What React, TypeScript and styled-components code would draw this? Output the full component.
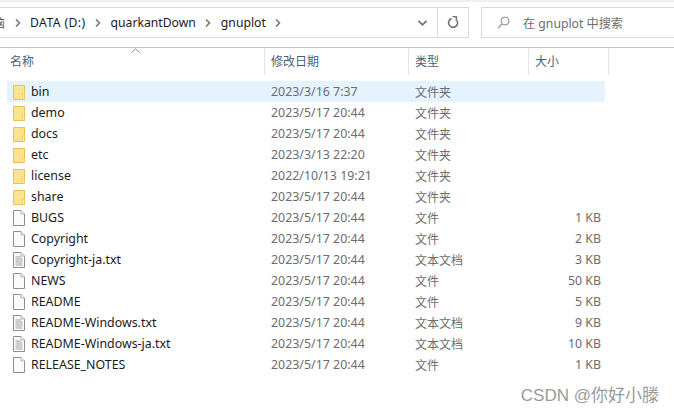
import React from "react";
import styled, { createGlobalStyle } from "styled-components";

const GlobalStyle = createGlobalStyle`
  html, body {
    margin: 0;
    padding: 0;
    background: #fff;
  }
  body {
    font-family: "Noto Sans", "Noto Sans CJK SC", sans-serif;
    font-size: 12px;
  }
`;

const Window = styled.div`
  position: relative;
  width: 674px;
  height: 413px;
  overflow: hidden;
  background: #fff;
  color: #1a1a1a;
`;

const TopEdge = styled.div`
  height: 2px;
  background: #f0f0f0;
  margin-bottom: 5px;
`;

const NavBar = styled.div`
  display: flex;
  height: 31px;
  padding-bottom: 9px;
  border-bottom: 1px solid #c4c4c4;
`;

const AddressBox = styled.div`
  display: flex;
  align-items: center;
  box-sizing: border-box;
  width: 469px;
  height: 31px;
  border: 1px solid #d9d9d9;
  border-left: none;
`;

const Crumbs = styled.div`
  display: flex;
  align-items: center;
  flex: 1;
  font-size: 12.2px;
  overflow: hidden;
`;

const Crumb = styled.span<{ $spread?: number }>`
  white-space: nowrap;
  letter-spacing: ${({ $spread }) => $spread ?? 0}px;
`;

const Cut = styled.span`
  flex: 0 0 5px;
  overflow: hidden;
  white-space: nowrap;
  direction: rtl;
  color: #555;
`;

const ChevronBox = styled.span`
  display: flex;
  justify-content: center;
  flex: 0 0 25px;
`;

const DropBox = styled.span`
  display: flex;
  align-items: center;
  justify-content: center;
  width: 13px;
  height: 100%;
  margin-right: 8px;
`;

const RefreshBox = styled.span`
  display: flex;
  align-items: center;
  justify-content: center;
  box-sizing: border-box;
  width: 31px;
  height: 100%;
  border-left: 1px solid #d9d9d9;
`;

const SearchBox = styled.div`
  display: flex;
  align-items: center;
  box-sizing: border-box;
  width: 193px;
  height: 31px;
  margin-left: 12px;
  padding-left: 15px;
  gap: 13px;
  border: 1px solid #d9d9d9;
  border-right: none;
  color: #6d6d6d;
  font-size: 12.2px;
`;

const HeaderRow = styled.div`
  display: flex;
  height: 27px;
  padding-left: 2px;
`;

const HeaderCell = styled.div<{ $w: number; $pad: number }>`
  position: relative;
  box-sizing: border-box;
  width: ${({ $w }) => $w}px;
  padding: 4px 0 0 ${({ $pad }) => $pad}px;
  border-right: 1px solid #e5e5e5;
  color: #4c607a;
  font-size: 12px;
`;

const SortCaret = styled.svg`
  position: absolute;
  left: 129px;
  top: 0;
`;

const Rows = styled.div`
  display: flex;
  flex-direction: column;
  padding: 6px 0 0 7px;
`;

const Row = styled.div<{ $selected?: boolean }>`
  display: flex;
  align-items: center;
  width: 598px;
  height: 21px;
  background: ${({ $selected }) => ($selected ? "#e5f3ff" : "transparent")};
`;

const NameCell = styled.div`
  display: flex;
  align-items: center;
  width: 264px;
  padding-left: 6px;
  box-sizing: border-box;
  gap: 6px;
  color: #1a1a1a;
  font-size: 12.4px;
`;

const DateCell = styled.div`
  width: 144px;
  color: #6d6d6d;
  font-size: 12.4px;
`;

const TypeCell = styled.div`
  width: 113px;
  color: #6d6d6d;
  font-size: 12px;
`;

const SizeCell = styled.div`
  width: 73px;
  text-align: right;
  color: #6d6d6d;
  font-size: 12.4px;
`;

const Watermark = styled.div`
  position: absolute;
  right: 15px;
  bottom: 7px;
  color: #9a9a9a;
  font-size: 17px;
  line-height: 20px;
  font-family: "Liberation Sans", "Noto Sans CJK SC", sans-serif;
`;

const FolderIcon = () => (
  <svg width="12" height="16" viewBox="0 0 12 16">
    <path d="M0.5 1.5 H11.5 V15.5 H0.5 Z" fill="#fde38f" stroke="#e9c252" />
    <rect x="9.5" y="10" width="2" height="5.5" fill="#fff3c4" stroke="#e9c252" strokeWidth="0.7" />
  </svg>
);

const FileIcon = ({ lines }: { lines?: boolean }) => (
  <svg width="12" height="16" viewBox="0 0 12 16">
    <path d="M0.5 0.5 H8 L11.5 4 V15.5 H0.5 Z" fill="#fafafa" stroke="#8e8e8e" />
    <path d="M8 0.5 V4 H11.5" fill="#f2f2f2" stroke="#b5b5b5" />
    {lines && (
      <path
        d="M2.5 5 H8 M2.5 7 H9.5 M2.5 9 H9.5 M2.5 11 H9.5 M2.5 13 H9.5"
        stroke="#a0a0a0"
        strokeWidth="1"
      />
    )}
  </svg>
);

const Chevron = () => (
  <ChevronBox>
    <svg width="6" height="8" viewBox="0 0 6 8">
      <path d="M1 0.5 L4.5 4 L1 7.5" fill="none" stroke="#7a7a7a" strokeWidth="1.6" />
    </svg>
  </ChevronBox>
);

type Kind = "folder" | "file" | "text";

const files: { name: string; date: string; kind: Kind; size?: string }[] = [
  { name: "bin", date: "2023/3/16 7:37", kind: "folder" },
  { name: "demo", date: "2023/5/17 20:44", kind: "folder" },
  { name: "docs", date: "2023/5/17 20:44", kind: "folder" },
  { name: "etc", date: "2023/3/13 22:20", kind: "folder" },
  { name: "license", date: "2022/10/13 19:21", kind: "folder" },
  { name: "share", date: "2023/5/17 20:44", kind: "folder" },
  { name: "BUGS", date: "2023/5/17 20:44", kind: "file", size: "1 KB" },
  { name: "Copyright", date: "2023/5/17 20:44", kind: "file", size: "2 KB" },
  { name: "Copyright-ja.txt", date: "2023/5/17 20:44", kind: "text", size: "3 KB" },
  { name: "NEWS", date: "2023/5/17 20:44", kind: "file", size: "50 KB" },
  { name: "README", date: "2023/5/17 20:44", kind: "file", size: "5 KB" },
  { name: "README-Windows.txt", date: "2023/5/17 20:44", kind: "text", size: "9 KB" },
  { name: "README-Windows-ja.txt", date: "2023/5/17 20:44", kind: "text", size: "10 KB" },
  { name: "RELEASE_NOTES", date: "2023/5/17 20:44", kind: "file", size: "1 KB" },
];

const typeLabel: Record<Kind, string> = {
  folder: "文件夹",
  file: "文件",
  text: "文本文档",
};

export default function App() {
  return (
    <Window>
      <GlobalStyle />
      <TopEdge />
      <NavBar>
        <AddressBox>
          <Crumbs>
            <Cut>脑</Cut>
            <Chevron />
            <Crumb $spread={0.4}>DATA (D:)</Crumb>
            <Chevron />
            <Crumb>quarkantDown</Crumb>
            <Chevron />
            <Crumb>gnuplot</Crumb>
            <Chevron />
          </Crumbs>
          <DropBox>
            <svg width="9" height="6" viewBox="0 0 9 6">
              <path d="M0.5 0.8 L4.5 4.8 L8.5 0.8" fill="none" stroke="#6d6d6d" strokeWidth="1.6" />
            </svg>
          </DropBox>
          <RefreshBox>
            <svg width="12" height="13" viewBox="0 0 12 13">
              <path
                d="M8.8 3.2 A4.5 4.5 0 1 1 3.2 3.2"
                transform="rotate(20 6 7)"
                fill="none"
                stroke="#6d6d6d"
                strokeWidth="1.5"
              />
              <path d="M5.5 0.5 L9.5 0.8 L9.2 4.8" fill="none" stroke="#6d6d6d" strokeWidth="1.3" />
            </svg>
          </RefreshBox>
        </AddressBox>
        <SearchBox>
          <svg width="13" height="13" viewBox="0 0 13 13">
            <circle cx="8" cy="5" r="4" fill="none" stroke="#8a8a8a" />
            <path d="M5 8 L0.8 12.2" stroke="#b98a68" strokeWidth="1.2" />
          </svg>
          <span>在 gnuplot 中搜索</span>
        </SearchBox>
      </NavBar>
      <HeaderRow>
        <HeaderCell $w={263} $pad={8}>
          名称
          <SortCaret width="9" height="5" viewBox="0 0 9 5">
            <path d="M0.5 4.5 L4.5 0.8 L8.5 4.5" fill="none" stroke="#8a8a8a" />
          </SortCaret>
        </HeaderCell>
        <HeaderCell $w={144} $pad={6}>修改日期</HeaderCell>
        <HeaderCell $w={120} $pad={6}>类型</HeaderCell>
        <HeaderCell $w={80} $pad={6}>大小</HeaderCell>
      </HeaderRow>
      <Rows>
        {files.map((f, i) => (
          <Row key={f.name} $selected={i === 0}>
            <NameCell>
              {f.kind === "folder" ? <FolderIcon /> : <FileIcon lines={f.kind === "text"} />}
              {f.name}
            </NameCell>
            <DateCell>{f.date}</DateCell>
            <TypeCell>{typeLabel[f.kind]}</TypeCell>
            <SizeCell>{f.size}</SizeCell>
          </Row>
        ))}
      </Rows>
      <Watermark>CSDN @你好小滕</Watermark>
    </Window>
  );
}
